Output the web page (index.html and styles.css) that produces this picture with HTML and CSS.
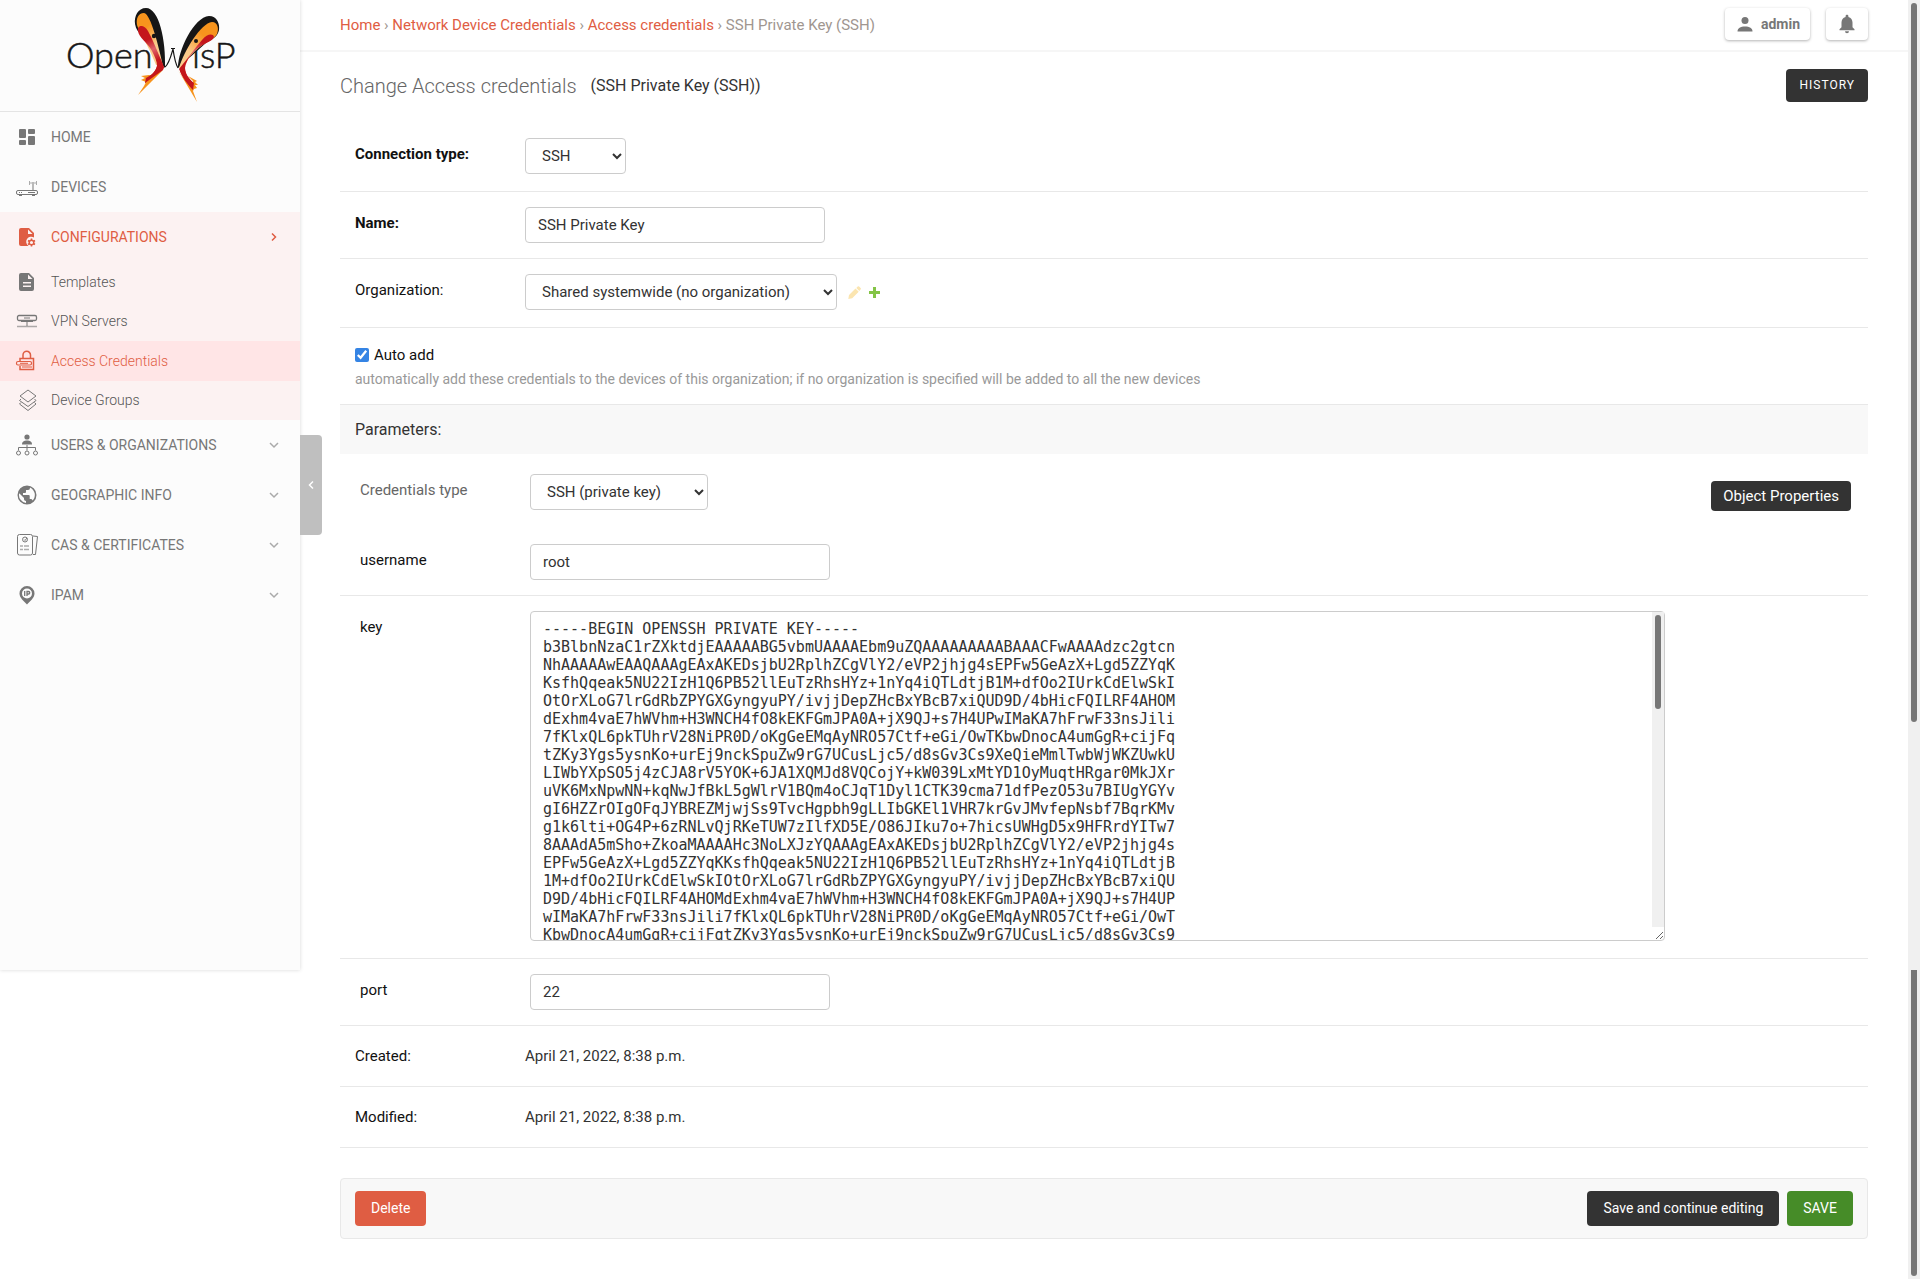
FILE: index.html
```html
<!DOCTYPE html>
<html lang="en">
<head>
  <meta charset="UTF-8">
  <meta name="viewport" content="width=device-width, initial-scale=1.0">
  <title>SSH Private Key (SSH) | Change Access credentials | OpenWISP</title>
  <link rel="stylesheet" href="styles.css">
</head>
<body>
  <div class="page">

    <!-- Sidebar -->
    <aside class="sidebar">
      <a href="#" class="logo" aria-label="OpenWISP">
        <svg width="180" height="111" viewBox="60 0 180 111">
          <defs>
            <linearGradient id="wing-left" x1="0" y1="0" x2="0.4" y2="1">
              <stop offset="0.35" stop-color="#f7941d"/>
              <stop offset="0.75" stop-color="#fbcb8b"/>
            </linearGradient>
            <linearGradient id="wing-right" x1="1" y1="0" x2="0.2" y2="1">
              <stop offset="0.35" stop-color="#f7941d"/>
              <stop offset="0.75" stop-color="#fbcb8b"/>
            </linearGradient>
            <linearGradient id="red-left" x1="0" y1="0" x2="0.2" y2="1">
              <stop offset="0.3" stop-color="#c4161c"/>
              <stop offset="0.5" stop-color="#e0636a"/>
              <stop offset="0.72" stop-color="#c4161c"/>
            </linearGradient>
            <linearGradient id="red-right" x1="1" y1="0" x2="0.4" y2="1">
              <stop offset="0.25" stop-color="#c4161c"/>
              <stop offset="0.48" stop-color="#e0636a"/>
              <stop offset="0.7" stop-color="#c4161c"/>
            </linearGradient>
          </defs>
          <text x="66" y="68" class="logo-text">Open</text>
          <text x="192" y="68" class="logo-text">isP</text>
          <!-- left wing -->
          <path fill="#161616" d="M165 68C166 40 159 8 146 8c-8 0-12 8-11 16 1 5 3 8 5 9l23 33z"/>
          <path fill="url(#wing-left)" d="M163 66C159 48 151 14 144 13c-6 0-8 6-7 12 2 7 10 17 19 40z"/>
          <path fill="url(#red-left)" d="M138 31c-1-6 6-7 10 0 5 9 9 20 14 31l2 5c0 3-10 10-19 16l0-4c8-4 11-9 12-13 0-5-2-9-5-15-5-9-13-13-14-20z"/>
          <path fill="#f7941d" d="M164 69c-6 5-12 7-15 6l-8 1 4 2-4 2 5 2-2 4-6 9 14-14z"/>
          <path fill="#c4161c" d="M157 66l7 1-1 3-18 13 1-5c6-3 10-7 11-12z"/>
          <circle cx="154" cy="36" r="2.200" fill="#161616"/>
          <!-- right wing -->
          <path fill="#161616" d="M178 68c0-18 16-51 31-52 8 0 11 8 10 14-1 6-6 9-12 12z"/>
          <path fill="url(#wing-right)" d="M179 68c5-17 22-45 33-46 6 0 7 7 5 12-3 6-13 8-22 17-6 6-10 12-12 19z"/>
          <path fill="url(#red-right)" d="M214 37c-1-4-7-3-12 3-7 8-14 18-23 29 3 7 8 15 13 21l2-6c-5-5-9-10-9-16 1-8 8-17 16-22 6-4 12-5 13-9z"/>
          <path fill="#f7941d" d="M178 70c6 9 9 13 14 18l1-7-5-5 9 5-2 1 3 3-3 0 2 3-3 1-1 2 4 11z"/>
          <path fill="#c4161c" d="M181 68h4c0 6 4 11 9 15l-1 7c-5-5-11-13-13-19z"/>
          <circle cx="196" cy="41" r="2" fill="#161616"/>
          <path fill="none" stroke="#161616" stroke-width="1.200" d="M165 67c4-3 6-11 8-18 1 7 2 14 5 19M171 48.500h4"/>
        </svg>
      </a>

      <nav>
        <ul class="menu">
          <li>
            <a href="#" class="menu-item">
              <svg class="icon" viewBox="0 0 24 24"><g fill="currentColor"><rect x="4" y="4" width="7" height="9" rx="1"/><rect x="13" y="4" width="7" height="5" rx="1"/><rect x="4" y="15" width="7" height="5" rx="1"/><rect x="13" y="11" width="7" height="9" rx="1"/></g></svg>
              <span>HOME</span>
            </a>
          </li>
          <li>
            <a href="#" class="menu-item">
              <svg class="icon" viewBox="0 0 24 24"><g fill="none" stroke="currentColor"><rect x="1.500" y="15.500" width="21" height="4" rx="1.500"/><path d="M18 15V7M13 17.500h7M4 17.500h1M6 17.500h1M4 20.500h3M17 20.500h3"/><path stroke-opacity=".6" d="M14.500 6v4M16 7v2M20 7v2M21.500 6v4"/></g></svg>
              <span>DEVICES</span>
            </a>
          </li>
          <li class="open">
            <a href="#" class="menu-item active">
              <svg class="icon" viewBox="0 0 24 24"><path fill="currentColor" d="M6 3h8l5 5v4.500a5 5 0 0 0-5.500 8.500H6a2 2 0 0 1-2-2V5a2 2 0 0 1 2-2zm7 1.500V9h4.500z"/><circle cx="16.500" cy="17.500" r="2.300" fill="none" stroke="currentColor" stroke-width="1.500"/><path stroke="currentColor" stroke-width="1.500" d="M16.500 13.500v1.500M16.500 20v1.500M13 15.500l1.300.8M18.700 18.700l1.300.8M13 19.500l1.300-.8M18.700 16.300l1.300-.8"/></svg>
              <span>CONFIGURATIONS</span>
              <svg class="chevron" viewBox="0 0 10 10"><path d="M3 1.500l3.500 3.500-3.500 3.500"/></svg>
            </a>
            <ul class="submenu">
              <li>
                <a href="#">
                  <svg class="icon" viewBox="0 0 24 24"><path fill="currentColor" d="M6 3h8l5 5v11a2 2 0 0 1-2 2H6a2 2 0 0 1-2-2V5a2 2 0 0 1 2-2zm7 1.500V9h4.500zM8 12v1.500h8V12zm0 3.500V17h8v-1.500z" fill-rule="evenodd"/></svg>
                  <span>Templates</span>
                </a>
              </li>
              <li>
                <a href="#">
                  <svg class="icon" viewBox="0 0 24 24"><g fill="none" stroke="currentColor"><rect x="2.500" y="6.500" width="19" height="5" rx="1.500" stroke-width="1.300"/><path d="M9 9h6M6 12.500h12M12 13v4"/><path stroke-opacity=".6" stroke-width="1.500" d="M2 17.500h20"/></g></svg>
                  <span>VPN Servers</span>
                </a>
              </li>
              <li>
                <a href="#" class="current">
                  <svg class="icon" viewBox="0 0 24 24"><g fill="none" stroke="currentColor" stroke-width="1.500"><path d="M5 12V9.500h13.500V20.500H5V17M8 9V6a3.700 3.700 0 0 1 7.500 0v3"/><rect x="1.500" y="12.500" width="15" height="3.500" rx="1.500" stroke-width="1.200"/><path d="M7 18h10M5 14.300h8" stroke-width="1"/></g></svg>
                  <span>Access Credentials</span>
                </a>
              </li>
              <li>
                <a href="#">
                  <svg class="icon" viewBox="0 0 24 24"><g fill="none" stroke="currentColor"><path d="M13 2l8 6-8 6-8-6zM6 11l-1.500 1.500L13 18.500l8-6L19.500 11M6 14.500L4.500 16l8.500 6.500 8-6.500-1.500-1.500"/></g></svg>
                  <span>Device Groups</span>
                </a>
              </li>
            </ul>
          </li>
          <li>
            <a href="#" class="menu-item">
              <svg class="icon" viewBox="0 0 24 24"><circle cx="12" cy="4" r="2.600" fill="currentColor"/><path fill="currentColor" d="M7 11.500c0-3 2-4 5-4s5 1 5 4z"/><g fill="none" stroke="currentColor"><path d="M12 12v5.500M3.500 17.500V14.500h17v3"/><circle cx="3.500" cy="20" r="2"/><circle cx="12" cy="20" r="2"/><circle cx="20.500" cy="20" r="2"/></g></svg>
              <span>USERS &amp; ORGANIZATIONS</span>
              <svg class="chevron" viewBox="0 0 10 10"><path d="M1 3l4 4 4-4"/></svg>
            </a>
          </li>
          <li>
            <a href="#" class="menu-item">
              <svg class="icon" viewBox="0 0 24 24"><path fill="currentColor" d="M12 2.500a9.500 9.500 0 1 0 0 19 9.500 9.500 0 0 0 0-19zm-1 17.500a8 8 0 0 1-6.800-9.800L9 15v1c0 1.100.9 2 2 2zm6.600-2.500a2 2 0 0 0-1.900-1.400h-1v-3a1 1 0 0 0-1-1H8v-2h2a1 1 0 0 0 1-1V7h2a2 2 0 0 0 2-2v-.4a8 8 0 0 1 2.600 12.900z"/></svg>
              <span>GEOGRAPHIC INFO</span>
              <svg class="chevron" viewBox="0 0 10 10"><path d="M1 3l4 4 4-4"/></svg>
            </a>
          </li>
          <li>
            <a href="#" class="menu-item">
              <svg class="icon" viewBox="0 0 24 24"><g fill="none" stroke="currentColor"><rect x="2.500" y="1.500" width="15" height="20.500" rx="2"/><path d="M18 3l4.500.500-2 18H18"/><circle cx="10" cy="6.500" r="2.500"/><path d="M9 6.500l1 1 2-2.500"/><path stroke-opacity=".6" stroke-width="1.500" d="M5 13h3M9 13h5M5 16.500h3M9 16.500h5"/></g></svg>
              <span>CAS &amp; CERTIFICATES</span>
              <svg class="chevron" viewBox="0 0 10 10"><path d="M1 3l4 4 4-4"/></svg>
            </a>
          </li>
          <li>
            <a href="#" class="menu-item">
              <svg class="icon" viewBox="0 0 24 24"><path fill="currentColor" fill-rule="evenodd" d="M12 3a7.500 7.500 0 0 0-7.500 7.500C4.500 15 9 18 12 21.500c3-3.500 7.500-6.500 7.500-11A7.500 7.500 0 0 0 12 3zm0 2.500a5 5 0 1 1 0 10 5 5 0 0 1 0-10z"/><path fill="none" stroke="currentColor" stroke-width="1.300" d="M9.700 8v5M12 13V8.500h1.500a1.200 1.200 0 0 1 0 2.500H12"/></svg>
              <span>IPAM</span>
              <svg class="chevron" viewBox="0 0 10 10"><path d="M1 3l4 4 4-4"/></svg>
            </a>
          </li>
        </ul>
      </nav>

      <button type="button" class="toggle" aria-label="Collapse menu">
        <svg class="chevron" viewBox="0 0 10 10"><path d="M7 1.500L3.500 5l3.500 3.500"/></svg>
      </button>
    </aside>

    <main class="main">
      <header class="topbar">
        <div class="breadcrumbs">
          <a href="#">Home</a> ›
          <a href="#">Network Device Credentials</a> ›
          <a href="#">Access credentials</a> ›
          SSH Private Key (SSH)
        </div>
        <div class="tools">
          <button type="button" class="tool account">
            <svg width="16" height="16" viewBox="0 0 16 16"><circle cx="8" cy="4.500" r="3.500" fill="currentColor"/><path fill="currentColor" d="M.5 15.500c0-3.500 3-5 7.500-5s7.500 1.500 7.500 5z"/></svg>
            admin
          </button>
          <button type="button" class="tool" aria-label="Notifications">
            <svg width="16" height="20" viewBox="0 0 16 20"><path fill="currentColor" d="M8 .8c.9 0 1.400.6 1.400 1.400v.7c2.700.7 4.100 3 4.100 5.600v4.800l2 2v1H.5v-1l2-2V8.500c0-2.600 1.400-4.900 4.100-5.600v-.7C6.600 1.400 7.100.8 8 .8zM6 17.300h4a2 2 0 0 1-4 0z"/></svg>
          </button>
        </div>
      </header>

      <div class="content">
        <div class="heading">
          <h1>Change Access credentials</h1>
          <h2>(SSH Private Key (SSH))</h2>
          <a href="#" class="history">HISTORY</a>
        </div>

        <form>
          <div class="row with-select">
            <label for="connector" class="required">Connection type:</label>
            <select id="connector" class="narrow"><option>SSH</option></select>
          </div>
          <div class="row">
            <label for="name" class="required">Name:</label>
            <input type="text" id="name" value="SSH Private Key">
          </div>
          <div class="row with-select">
            <label for="organization">Organization:</label>
            <select id="organization" class="wide"><option>Shared systemwide (no organization)</option></select>
            <a href="#" class="change-link" aria-label="Change organization"><svg width="13" height="13" viewBox="0 0 13 13"><path fill="#fbe5b0" d="M1 9l6.500-6.500 3.200 3.200L4.200 12.200.3 12.900zM8.300 1.900L9.700.5a1 1 0 0 1 1.400 0l1.500 1.500a1 1 0 0 1 0 1.400l-1.300 1.500z"/></svg></a>
            <a href="#" class="add-link" aria-label="Add organization"><svg width="11" height="11" viewBox="0 0 11 11"><path fill="#84c446" d="M4 0h3v4h4v3H7v4H4V7H0V4h4z"/></svg></a>
          </div>
          <div class="row checkbox-row">
            <div class="check">
              <input type="checkbox" id="auto-add" checked>
              <label for="auto-add">Auto add</label>
            </div>
            <p class="help">automatically add these credentials to the devices of this organization; if no organization is specified will be added to all the new devices</p>
          </div>

          <h3 class="params-title">Parameters:</h3>
          <div class="row inner type-row">
            <label for="credentials-type">Credentials type</label>
            <select id="credentials-type" class="medium"><option>SSH (private key)</option></select>
            <button type="button" class="btn properties">Object Properties</button>
          </div>
          <div class="row inner">
            <label for="username">username</label>
            <input type="text" id="username" value="root">
          </div>
          <div class="row inner key-row">
            <label for="key">key</label>
            <div class="key-box">
              <textarea id="key" spellcheck="false">-----BEGIN OPENSSH PRIVATE KEY-----
b3BlbnNzaC1rZXktdjEAAAAABG5vbmUAAAAEbm9uZQAAAAAAAAABAAACFwAAAAdzc2gtcn
NhAAAAAwEAAQAAAgEAxAKEDsjbU2RplhZCgVlY2/eVP2jhjg4sEPFw5GeAzX+Lgd5ZZYqK
KsfhQqeak5NU22IzH1Q6PB52llEuTzRhsHYz+1nYq4iQTLdtjB1M+dfOo2IUrkCdElwSkI
OtOrXLoG7lrGdRbZPYGXGyngyuPY/ivjjDepZHcBxYBcB7xiQUD9D/4bHicFQILRF4AHOM
dExhm4vaE7hWVhm+H3WNCH4fO8kEKFGmJPA0A+jX9QJ+s7H4UPwIMaKA7hFrwF33nsJili
7fKlxQL6pkTUhrV28NiPR0D/oKgGeEMqAyNRO57Ctf+eGi/OwTKbwDnocA4umGgR+cijFq
tZKy3Ygs5ysnKo+urEj9nckSpuZw9rG7UCusLjc5/d8sGv3Cs9XeQieMmlTwbWjWKZUwkU
LIWbYXpSO5j4zCJA8rV5YOK+6JA1XQMJd8VQCojY+kW039LxMtYD1OyMuqtHRgar0MkJXr
uVK6MxNpwNN+kqNwJfBkL5gWlrV1BQm4oCJqT1Dyl1CTK39cma71dfPezO53u7BIUgYGYv
gI6HZZrOIgOFqJYBREZMjwjSs9TvcHgpbh9gLLIbGKEl1VHR7krGvJMvfepNsbf7BqrKMv
g1k6lti+OG4P+6zRNLvQjRKeTUW7zIlfXD5E/O86JIku7o+7hicsUWHgD5x9HFRrdYITw7
8AAAdA5mSho+ZkoaMAAAAHc3NoLXJzYQAAAgEAxAKEDsjbU2RplhZCgVlY2/eVP2jhjg4s
EPFw5GeAzX+Lgd5ZZYqKKsfhQqeak5NU22IzH1Q6PB52llEuTzRhsHYz+1nYq4iQTLdtjB
1M+dfOo2IUrkCdElwSkIOtOrXLoG7lrGdRbZPYGXGyngyuPY/ivjjDepZHcBxYBcB7xiQU
D9D/4bHicFQILRF4AHOMdExhm4vaE7hWVhm+H3WNCH4fO8kEKFGmJPA0A+jX9QJ+s7H4UP
wIMaKA7hFrwF33nsJili7fKlxQL6pkTUhrV28NiPR0D/oKgGeEMqAyNRO57Ctf+eGi/OwT
KbwDnocA4umGgR+cijFqtZKy3Ygs5ysnKo+urEj9nckSpuZw9rG7UCusLjc5/d8sGv3Cs9</textarea>
              <div class="key-scroll" aria-hidden="true"><div class="thumb key-thumb"></div></div>
            </div>
          </div>
          <div class="row inner">
            <label for="port">port</label>
            <input type="text" id="port" value="22">
          </div>
          <div class="row readonly">
            <span class="label">Created:</span>
            <span class="value">April 21, 2022, 8:38 p.m.</span>
          </div>
          <div class="row readonly">
            <span class="label">Modified:</span>
            <span class="value">April 21, 2022, 8:38 p.m.</span>
          </div>

          <div class="submit-row">
            <a href="#" class="btn delete">Delete</a>
            <button type="button" class="btn">Save and continue editing</button>
            <button type="submit" class="btn save">SAVE</button>
          </div>
        </form>
      </div>
    </main>

    <div class="scroll-track" aria-hidden="true">
      <div class="thumb thumb-top"></div>
      <div class="thumb thumb-bottom"></div>
    </div>
  </div>
</body>
</html>
```

FILE: styles.css
```css
* {
  box-sizing: border-box;
}

body {
  margin: 0;
  font-family: Roboto, "Liberation Sans", sans-serif;
  font-size: 15px;
  color: #333;
  background: #fff;
}

a {
  text-decoration: none;
}

ul {
  list-style: none;
  margin: 0;
  padding: 0;
}

.page {
  display: grid;
  grid-template-columns: 300px minmax(0, 1fr) 12px;
  min-height: 100vh;
}

/* Sidebar */
.sidebar {
  position: relative;
  height: 970px;
  background: #fcfcfc;
  box-shadow: 0 0 4px rgba(0, 0, 0, 0.16);
}

.logo {
  display: flex;
  justify-content: center;
  border-bottom: 1px solid #e4e4e4;
}

.logo-text {
  font-family: Lato, sans-serif;
  font-size: 36px;
  font-weight: 300;
  fill: #161616;
  stroke: #161616;
  stroke-width: 0.5;
}

.menu-item,
.submenu a {
  display: flex;
  align-items: center;
  gap: 12px;
  padding: 0 21px 0 15px;
  color: #777;
  font-size: 14px;
}

.menu-item {
  height: 50px;
}

.menu-item.active {
  color: #df5d43;
}

.open {
  background: #fcf2f2;
}

.submenu {
  display: flex;
  flex-direction: column;
  height: 158px;
}

.submenu li,
.submenu a {
  display: flex;
  flex: 1;
}

.submenu a {
  font-weight: 300;
  color: #555;
}

.submenu .icon {
  color: #777;
}

.submenu a.current,
.submenu .current .icon {
  color: #df5d43;
}

.submenu a.current {
  background: #ffe5e6;
}

.icon {
  width: 24px;
  height: 24px;
  flex: none;
}

.chevron {
  width: 10px;
  height: 10px;
  margin-left: auto;
  fill: none;
  stroke: #aaa;
  stroke-width: 1.5;
}

.active .chevron {
  stroke: #df5d43;
}

.toggle {
  position: absolute;
  top: 435px;
  left: 100%;
  width: 22px;
  height: 100px;
  padding: 0;
  border: 0;
  border-radius: 0 4px 4px 0;
  background: #bfbfbf;
}

.toggle .chevron {
  stroke: #fff;
}

/* Top bar */
.topbar {
  display: flex;
  align-items: center;
  justify-content: space-between;
  height: 52px;
  padding: 0 40px;
  border-bottom: 2px solid #f6f6f6;
}

.breadcrumbs {
  color: #a09690;
}

.breadcrumbs a {
  color: #df5d43;
}

.tools {
  display: flex;
  gap: 16px;
}

.tool {
  display: flex;
  align-items: center;
  gap: 8px;
  height: 32px;
  margin-top: -2px;
  padding: 0 13px;
  border: 0;
  border-radius: 4px;
  background: #fff;
  box-shadow: 0 1px 3px rgba(0, 0, 0, 0.3);
  color: #777;
  font-family: inherit;
  font-size: 14px;
  font-weight: bold;
}

.account {
  padding: 0 10px 0 12px;
}

/* Page heading */
.content {
  padding: 17px 40px 40px;
}

.heading {
  display: flex;
  align-items: center;
  gap: 14px;
  margin-bottom: 21px;
}

.heading h1,
.heading h2 {
  margin: 0;
}

.heading h1 {
  font-size: 20px;
  font-weight: 300;
  line-height: 22px;
  color: #666;
}

.heading h2 {
  font-size: 16px;
  font-weight: 400;
}

.history {
  margin-left: auto;
  padding: 0 13px;
  border-radius: 4px;
  background: #333;
  color: #fff;
  font-size: 12px;
  line-height: 33px;
  letter-spacing: 1px;
}

/* Form */
.row {
  display: flex;
  align-items: flex-start;
  padding: 15px;
  border-bottom: 1px solid #e8e8e8;
}

.with-select {
  padding-bottom: 17px;
}

.row > label,
.label {
  width: 170px;
  flex: none;
  padding-top: 6px;
  line-height: 20px;
  color: #111;
}

.row > .required {
  font-weight: bold;
}

.inner {
  padding-left: 20px;
}

input[type="text"],
select,
textarea {
  border: 1px solid #ccc;
  border-radius: 4px;
  background: #fff;
  color: #333;
  font-family: inherit;
  font-size: 15px;
}

input[type="text"] {
  width: 300px;
  height: 36px;
  padding: 0 12px;
}

select {
  height: 36px;
  padding: 0 12px;
}

.narrow {
  width: 101px;
}

.wide {
  width: 312px;
}

.medium {
  width: 178px;
}

.key-row {
  padding-bottom: 17px;
}

.key-box {
  position: relative;
  width: 1135px;
  max-width: 100%;
}

textarea {
  display: block;
  width: 100%;
  height: 330px;
  padding: 8px 12px 0;
  overflow: hidden;
  font-family: "DejaVu Sans Mono", monospace;
  line-height: 18px;
}

.key-scroll {
  position: absolute;
  top: 1px;
  right: 1px;
  bottom: 14px;
  width: 12px;
  padding: 3px;
  background: #f0f0f0;
}

.key-thumb {
  height: 94px;
  border-radius: 3px;
}

.change-link,
.add-link {
  align-self: center;
  display: flex;
}

.change-link {
  margin-left: 11px;
}

.add-link {
  margin-left: 8px;
}

.checkbox-row {
  display: block;
  padding: 18px 15px 16px;
}

.check {
  display: flex;
  align-items: center;
  gap: 5px;
  line-height: 18px;
  color: #111;
}

.check input {
  width: 14px;
  height: 14px;
  margin: 0;
  accent-color: #3584e4;
}

.help {
  margin: 6px 0 0;
  font-size: 14px;
  line-height: 18px;
  color: #999;
}

.params-title {
  margin: 0;
  padding: 0 15px;
  background: #f8f8f8;
  font-size: 16px;
  font-weight: 400;
  line-height: 49px;
}

.type-row {
  padding-top: 20px;
  padding-bottom: 18px;
  border-bottom: 0;
}

.type-row > label {
  color: #666;
}

.btn {
  padding: 0 16px;
  border: 0;
  border-radius: 4px;
  background: #333;
  color: #fff;
  font-family: inherit;
  font-size: 14px;
  line-height: 35px;
}

.properties {
  margin: 7px 2px 0 auto;
  padding: 0 12px;
  font-size: 15px;
  line-height: 30px;
}

.row > .label,
.value {
  line-height: 30px;
  padding-top: 0;
}

.submit-row {
  display: flex;
  gap: 8px;
  margin-top: 30px;
  padding: 12px 14px;
  border: 1px solid #e8e8e8;
  border-radius: 4px;
  background: #f8f8f8;
}

.delete {
  margin-right: auto;
  background: #df5d43;
}

.save {
  background: #468c28;
}

/* Page scrollbar */
.scroll-track {
  display: flex;
  flex-direction: column;
  align-items: center;
  justify-content: space-between;
  padding: 3px 0;
  background: #f0f0f0;
}

.thumb {
  width: 6px;
  background: #777;
}

.thumb-top {
  height: 719px;
  border-radius: 3px;
}

.thumb-bottom {
  height: 306px;
  border-radius: 0 0 3px 3px;
}
```
